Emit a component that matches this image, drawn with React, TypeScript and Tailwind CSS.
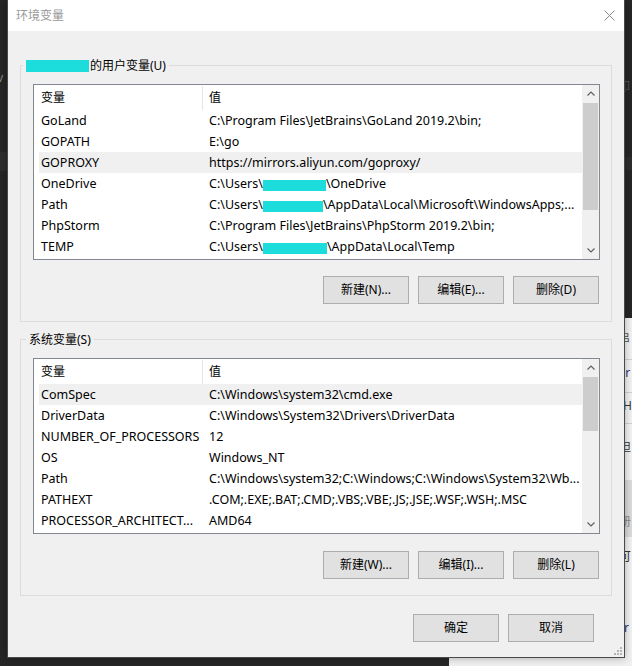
import React from 'react';

type Part = string | { mask: string };
type Row = { name: string; value: Part[]; active?: boolean };

const userVars: Row[] = [
  { name: 'GoLand', value: ['C:\\Program Files\\JetBrains\\GoLand 2019.2\\bin;'] },
  { name: 'GOPATH', value: ['E:\\go'] },
  { name: 'GOPROXY', value: ['https://mirrors.aliyun.com/goproxy/'], active: true },
  { name: 'OneDrive', value: ['C:\\Users\\', { mask: 'w-[63px]' }, '\\OneDrive'] },
  { name: 'Path', value: ['C:\\Users\\', { mask: 'w-[60px]' }, '\\AppData\\Local\\Microsoft\\WindowsApps;...'] },
  { name: 'PhpStorm', value: ['C:\\Program Files\\JetBrains\\PhpStorm 2019.2\\bin;'] },
  { name: 'TEMP', value: ['C:\\Users\\', { mask: 'w-[64px]' }, '\\AppData\\Local\\Temp'] },
];

const systemVars: Row[] = [
  { name: 'ComSpec', value: ['C:\\Windows\\system32\\cmd.exe'], active: true },
  { name: 'DriverData', value: ['C:\\Windows\\System32\\Drivers\\DriverData'] },
  { name: 'NUMBER_OF_PROCESSORS', value: ['12'] },
  { name: 'OS', value: ['Windows_NT'] },
  { name: 'Path', value: ['C:\\Windows\\system32;C:\\Windows;C:\\Windows\\System32\\Wb...'] },
  { name: 'PATHEXT', value: ['.COM;.EXE;.BAT;.CMD;.VBS;.VBE;.JS;.JSE;.WSF;.WSH;.MSC'] },
  { name: 'PROCESSOR_ARCHITECT...', value: ['AMD64'] },
];

const Chevron = ({ down }: { down?: boolean }) => (
  <svg width="8" height="5" viewBox="0 0 8 5" className={down ? 'rotate-180' : ''}>
    <path d="M0.5 4.5 L4 1 L7.5 4.5" fill="none" stroke="#606060" strokeWidth="1.2" />
  </svg>
);

const ScrollBar = ({ thumb }: { thumb: string }) => (
  <div className="flex w-[17px] shrink-0 flex-col bg-[#f0f0f0]">
    <div className="flex h-[17px] items-center justify-center">
      <Chevron />
    </div>
    <div className={`mx-px mt-px bg-[#cdcdcd] ${thumb}`} />
    <div className="flex-1" />
    <div className="flex h-[17px] items-center justify-center">
      <Chevron down />
    </div>
  </div>
);

const VarList = ({ rows, thumb }: { rows: Row[]; thumb: string }) => (
  <div className="flex h-[176px] border border-[#828790] bg-white">
    <div className="flex-1 overflow-hidden">
      {/* header */}
      <div className="flex h-[25px]">
        <div className="flex w-[168px] items-center pl-[7px]">变量</div>
        <div className="mt-px h-[24px] w-px bg-[#e5e5e5]" />
        <div className="flex items-center pl-[6px]">值</div>
      </div>
      {rows.map((row) => (
        <div
          key={row.name}
          className={`ml-[5px] flex h-[21px] items-center whitespace-nowrap text-[12.5px] ${row.active ? 'bg-[#f0f0f0]' : ''}`}
        >
          <div className="w-[163px] shrink-0 overflow-hidden pl-[2px]">{row.name}</div>
          <div className="flex h-full flex-1 items-center overflow-hidden pl-[7px]">
            {row.value.map((p, i) =>
              typeof p === 'string' ? (
                <span key={i}>{p}</span>
              ) : (
                <span key={i} className={`mt-[7px] h-[11px] shrink-0 self-start bg-[#1cdcdc] ${p.mask}`} />
              )
            )}
          </div>
        </div>
      ))}
    </div>
    <ScrollBar thumb={thumb} />
  </div>
);

const Button = ({ children }: { children: React.ReactNode }) => (
  <button className="flex h-[28px] w-[86px] items-center justify-center border border-[#adadad] bg-[#e1e1e1] text-black">
    {children}
  </button>
);

const Backdrop = () => (
  <>
    <div className="absolute left-0 top-[152px] h-[19px] w-[7px] bg-[#2d2d2d]" />
    <span className="absolute -left-[3px] top-[70px] text-[#8a8a8a]">v</span>
    <div className="absolute left-[624px] top-[157px] h-[13px] w-[8px] bg-[#2d2d2d]" />
    <span className="absolute left-[618px] top-[79px] text-[#555]">印</span>
    <div className="absolute bottom-0 left-[624px] right-0 top-[318px] overflow-hidden bg-[#f3f3f3]">
      <span className="absolute -left-[6px] top-[13px] text-[#555]">串</span>
      <div className="absolute left-0 right-0 top-[41px] h-px bg-[#d4d4d4]" />
      <span className="absolute -left-[6px] top-[47px] text-[#1f3a7a]">or</span>
      <div className="absolute left-0 right-0 top-[74px] h-px bg-[#d4d4d4]" />
      <span className="absolute -left-[1px] top-[80px] text-[#333]">H</span>
      <div className="absolute left-0 right-0 top-[105px] h-px bg-[#d4d4d4]" />
      <span className="absolute -left-[5px] top-[122px] text-[#333]">担</span>
      <div className="absolute left-0 right-0 top-[162px] h-[57px] bg-[#dcdcdc]" />
      <span className="absolute -left-[5px] top-[196px] text-[#888]">册</span>
      <span className="absolute -left-[5px] top-[231px] text-[#333]">可</span>
      <span className="absolute -left-[3px] top-[302px] text-[#1f3a7a]">ir</span>
    </div>
    <div className="absolute bottom-0 left-[449px] right-0 top-[658px] bg-[#f0f0f0]" />
  </>
);

export default function App() {
  return (
    <div className="relative h-[666px] w-[632px] overflow-hidden bg-[#262626] text-[12px] leading-4 text-black [font-family:'Noto_Sans','Noto_Sans_CJK_SC',sans-serif]">
      <Backdrop />

      <div className="absolute left-[7px] top-0 flex h-[658px] w-[618px] flex-col border-x border-b border-[#4a4a4a] bg-[#f0f0f0] shadow-[0_0_8px_rgba(0,0,0,0.3)]">
        {/* title bar */}
        <div className="flex h-[31px] shrink-0 items-center justify-between bg-white pl-2 pr-[9px]">
          <span className="text-[#9a9a9a]">环境变量</span>
          <svg width="11" height="11" viewBox="0 0 11 11">
            <path d="M0.5 0.5 L10.5 10.5 M10.5 0.5 L0.5 10.5" stroke="#8c8c8c" strokeWidth="1" />
          </svg>
        </div>

        <div className="flex flex-col px-3">
          {/* user variables */}
          <div className="relative mt-[34px] border border-[#dcdcdc] pb-[17px] pl-3 pr-[11px] pt-[18px]">
            <div className="absolute -top-[8px] left-[2px] flex items-center bg-[#f0f0f0] px-[3px]">
              <span className="mr-px h-[12px] w-[63px] bg-[#1cdcdc]" />
              <span>的用户变量(U)</span>
            </div>
            <VarList rows={userVars} thumb="h-[107px]" />
            <div className="mr-px mt-4 flex justify-end gap-[9px]">
              <Button>新建(N)...</Button>
              <Button>编辑(E)...</Button>
              <Button>删除(D)</Button>
            </div>
          </div>

          {/* system variables */}
          <div className="relative mt-[17px] border border-[#dcdcdc] pb-4 pl-3 pr-[11px] pt-[18px]">
            <div className="absolute -top-[8px] left-[5px] bg-[#f0f0f0] px-[3px]">系统变量(S)</div>
            <VarList rows={systemVars} thumb="h-[54px]" />
            <div className="mr-px mt-[17px] flex justify-end gap-[9px]">
              <Button>新建(W)...</Button>
              <Button>编辑(I)...</Button>
              <Button>删除(L)</Button>
            </div>
          </div>

          <div className="mt-[18px] flex justify-end gap-[9px] pr-[18px]">
            <Button>确定</Button>
            <Button>取消</Button>
          </div>
        </div>

        {/* resize grip */}
        <svg className="absolute bottom-[2px] right-[2px]" width="9" height="9" viewBox="0 0 9 9">
          <rect x="7" y="1" width="2" height="2" fill="#b4b4b4" />
          <rect x="4" y="4" width="2" height="2" fill="#b4b4b4" />
          <rect x="7" y="4" width="2" height="2" fill="#b4b4b4" />
          <rect x="1" y="7" width="2" height="2" fill="#b4b4b4" />
          <rect x="4" y="7" width="2" height="2" fill="#b4b4b4" />
          <rect x="7" y="7" width="2" height="2" fill="#b4b4b4" />
        </svg>
      </div>
    </div>
  );
}
